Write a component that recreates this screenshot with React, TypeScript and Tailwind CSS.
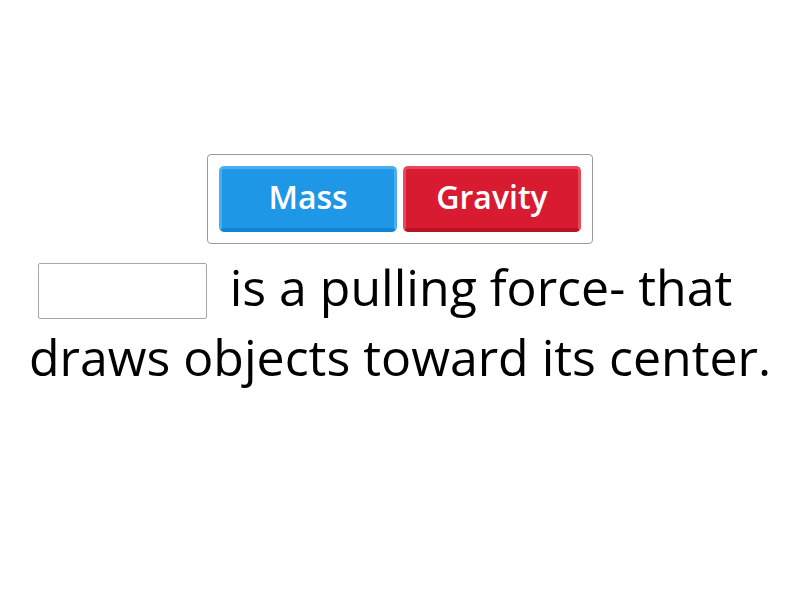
import React from 'react'

const font = { fontFamily: '"Open Sans", "Noto Sans", sans-serif' }

function Tile({ label, tone }: { label: string; tone: 'blue' | 'red' }) {
  const cls =
    tone === 'blue'
      ? 'bg-[#1f97e7] border-[#4aaef1] border-b-[#1384d3]'
      : 'bg-[#d81b31] border-[#e6475a] border-b-[#b51426]'
  return (
    <div
      className={`w-[178px] h-[66px] rounded-[5px] border-[3px] border-b-[4px] flex items-center justify-center text-white font-semibold text-[32px] pb-[4px] ${cls}`}
    >
      {label}
    </div>
  )
}

export default function App() {
  return (
    <div className="w-[800px] h-[600px] bg-white flex flex-col items-center pt-[154px]" style={font}>
      <div className="border border-[#9a9a9a] rounded-[4px] p-[11px] flex gap-[6px]">
        <Tile label="Mass" tone="blue" />
        <Tile label="Gravity" tone="red" />
      </div>
      <div className="w-[800px] text-center text-[50px] leading-[72px] text-black mt-[10px]">
        <div className="flex items-center justify-center pr-[30px] h-[72px]">
          <span className="inline-block w-[169px] h-[56px] border border-[#a6a6a6] rounded-[2px] mr-[23px] mt-[2px]" />
          <span className="-mt-[6px]">is a pulling force- that</span>
        </div>
        <div className="-mt-[5px]">draws objects toward its center.</div>
      </div>
    </div>
  )
}
